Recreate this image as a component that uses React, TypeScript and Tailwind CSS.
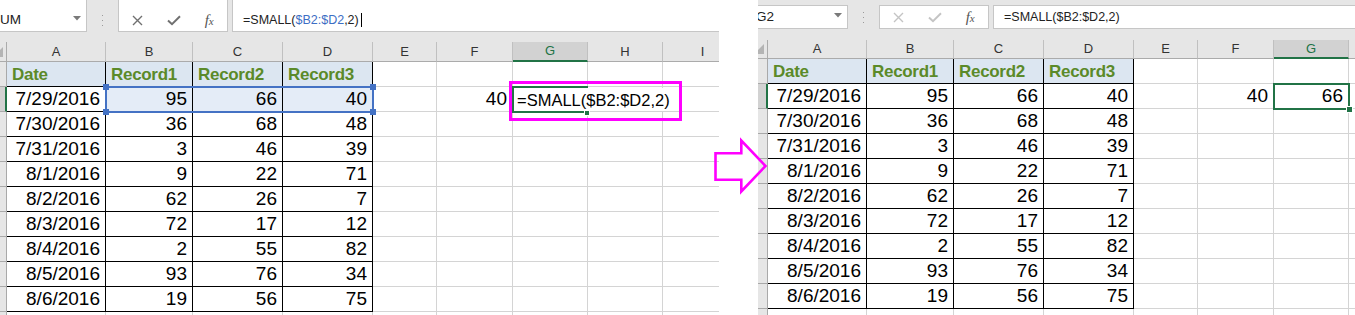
import React from "react";

type Side = "left" | "right";

const letters = ["A", "B", "C", "D", "E", "F", "G", "H", "I"];
const colW = ["w-[99px]", "w-[87px]", "w-[90px]", "w-[90px]", "w-[64px]", "w-[76px]", "w-[75px]", "w-[75px]", "w-[80px]"];
const heads = ["Date", "Record1", "Record2", "Record3"];

const data: [string, number, number, number][] = [
  ["7/29/2016", 95, 66, 40],
  ["7/30/2016", 36, 68, 48],
  ["7/31/2016", 3, 46, 39],
  ["8/1/2016", 9, 22, 71],
  ["8/2/2016", 62, 26, 7],
  ["8/3/2016", 72, 17, 12],
  ["8/4/2016", 2, 55, 82],
  ["8/5/2016", 93, 76, 34],
  ["8/6/2016", 19, 56, 75],
];

function Toolbar({ side }: { side: Side }) {
  const left = side === "left";
  const icon = left ? "#707070" : "#c4c4c4";
  return (
    <div className={left ? "flex h-[42px] items-start bg-[#e6e6e6]" : "flex h-[40px] items-start bg-[#e6e6e6] pt-[5px]"}>
      {/* name box */}
      <div
        className={
          left
            ? "flex h-[32px] w-[87px] shrink-0 items-center overflow-hidden border-r border-b border-[#c6c6c6] bg-white pt-[10px]"
            : "flex h-[24px] w-[90px] shrink-0 items-center overflow-hidden border-y border-r border-[#c6c6c6] bg-white"
        }
      >
        <span className={left ? "text-[13.5px] text-[#222]" : "ml-[-2px] text-[13.5px] text-[#222]"}>{left ? "UM" : "G2"}</span>
        <svg width="8" height="5" viewBox="0 0 8 5" className={left ? "ml-auto mr-[5px] mb-[5px]" : "ml-auto mr-[5px] mb-[3px]"}>
          <path d="M0 0H8L4 4.5Z" fill="#7a7a7a" />
        </svg>
      </div>
      {/* grip dots */}
      <div className={left ? "flex h-[32px] w-[31px] shrink-0 flex-col items-center justify-center gap-[4px] pt-[9px]" : "flex h-[24px] w-[31px] shrink-0 flex-col items-center justify-center gap-[4px]"}>
        <span className="h-px w-px bg-[#9a9a9a]" />
        <span className="h-px w-px bg-[#9a9a9a]" />
        <span className="h-px w-px bg-[#9a9a9a]" />
      </div>
      {/* cancel / enter / fx */}
      <div
        className={
          left
            ? "flex h-[32px] w-[110px] shrink-0 items-center border-x border-b border-[#c6c6c6] bg-white pl-px pt-[10px]"
            : "flex h-[24px] w-[110px] shrink-0 items-center border border-[#c6c6c6] bg-white pl-px"
        }
      >
        <div className="flex w-[36px] justify-center">
          <svg width="11" height="11" viewBox="0 0 11 11">
            <path d="M1 1L10 10M10 1L1 10" stroke={icon} strokeWidth="1.4" />
          </svg>
        </div>
        <div className="flex w-[36px] justify-center">
          <svg width="14" height="11" viewBox="0 0 14 11">
            <path d="M1 5.5L5 9.2L13 1.3" stroke={icon} strokeWidth="2" fill="none" />
          </svg>
        </div>
        <div className="flex w-[36px] justify-center font-['Liberation_Serif',serif] italic text-[#555]">
          <span className="text-[15px] leading-none">f</span>
          <span className="mt-[3px] text-[11px] leading-none">x</span>
        </div>
      </div>
      {/* formula input */}
      <div
        className={
          left
            ? "ml-[4px] flex h-[32px] flex-1 items-center border-l border-b border-[#c6c6c6] bg-white pl-[10px] pt-[9px] text-[12.5px] text-[#222]"
            : "ml-[4px] flex h-[24px] flex-1 items-center border-y border-l border-[#c6c6c6] bg-white pl-[10px] text-[12.5px] text-[#222]"
        }
      >
        {left ? (
          <>
            <span>=SMALL(</span>
            <span className="text-[#3c6ec4]">$B2:$D2</span>
            <span>,2)</span>
            <span className="ml-[2px] inline-block h-[14px] w-px bg-black" />
          </>
        ) : (
          <span>=SMALL($B2:$D2,2)</span>
        )}
      </div>
    </div>
  );
}

function ColHeader({ side }: { side: Side }) {
  const left = side === "left";
  const n = left ? 9 : 8;
  return (
    <div className={left ? "flex h-[20px] bg-[#e6e6e6]" : "flex h-[19px] bg-[#e6e6e6]"}>
      <div
        className={
          (left ? "w-[7px] pr-[3px]" : "w-[10px] pr-[3px]") +
          " flex shrink-0 items-end justify-end overflow-hidden border-r border-b border-[#ababab] pb-[4px]"
        }
      >
        <svg width="10" height="10" viewBox="0 0 10 10" className="shrink-0">
          <path d="M0 10L10 0V10Z" fill="#b4b4b4" />
        </svg>
      </div>
      {letters.slice(0, n).map((l, i) => (
        <div
          key={l}
          className={[
            colW[i],
            "flex shrink-0 items-center justify-center border-r border-[#c0c0c0] text-[13px]",
            i === 6 ? "border-b-2 border-b-[#217346] bg-[#d2d2d2] text-[#217346]" : "border-b border-b-[#ababab] text-[#333]",
          ].join(" ")}
        >
          {/* the right sheet only shows a sliver of column H */}
          {!left && i === 7 ? "" : l}
        </div>
      ))}
    </div>
  );
}

function Row({ side, r }: { side: Side; r: number }) {
  const left = side === "left";
  const n = left ? 9 : 8;
  const active = r === 1;
  return (
    <div className="flex h-[25px]">
      <div
        className={[
          left ? "w-[7px]" : "w-[10px]",
          "shrink-0 border-b border-[#a9a9a9]",
          active ? "border-r-2 border-r-[#217346] bg-[#d2d2d2]" : "border-r bg-[#e6e6e6]",
        ].join(" ")}
      />
      {letters.slice(0, n).map((l, c) => {
        const inTable = c < 4 && r <= 9;
        let text = "";
        let head = false;
        if (inTable) {
          if (r === 0) {
            text = heads[c];
            head = true;
          } else {
            text = String(data[r - 1][c]);
          }
        }
        if (r === 1 && c === 5) text = "40";
        if (!left && r === 1 && c === 6) text = "66";
        const selected = left && r === 1 && c >= 1 && c <= 3;
        return (
          <div
            key={l}
            className={[
              colW[c],
              "flex shrink-0 items-center border-r border-b pt-px",
              inTable ? "border-black" : "border-[#d4d4d4]",
              r === 0 && inTable ? "bg-[#dce6f1]" : selected ? "bg-[#e4ecf7]" : "",
              head
                ? "justify-start pl-[5px] text-[17px] font-bold tracking-[-0.3px] text-[#5b8a29]"
                : "justify-end pr-[5px] text-[19px] text-black",
            ].join(" ")}
          >
            {text}
          </div>
        );
      })}
    </div>
  );
}

function Sheet({ side }: { side: Side }) {
  const left = side === "left";
  return (
    <div className={left ? "relative h-[315px] w-[719px] shrink-0 overflow-hidden bg-white" : "relative h-[315px] w-[597px] shrink-0 overflow-hidden bg-white"}>
      <Toolbar side={side} />
      <ColHeader side={side} />
      {Array.from({ length: 11 }, (_, r) => (
        <Row key={r} side={side} r={r} />
      ))}

      {left ? (
        <>
          {/* referenced range B2:D2 */}
          <div className="absolute left-[105px] top-[86px] h-[27px] w-[269px] border-2 border-[#4472c4]" />
          <div className="absolute left-[103px] top-[84px] h-[6px] w-[6px] bg-[#4472c4]" />
          <div className="absolute left-[370px] top-[84px] h-[6px] w-[6px] bg-[#4472c4]" />
          <div className="absolute left-[103px] top-[109px] h-[6px] w-[6px] bg-[#4472c4]" />
          <div className="absolute left-[370px] top-[109px] h-[6px] w-[6px] bg-[#4472c4]" />

          {/* G2 in edit mode */}
          <div className="absolute left-[512px] top-[86px] h-[27px] w-[76px] border-2 border-r-0 border-[#217346]" />
          <div className="absolute left-[514px] top-[88px] flex h-[23px] w-[167px] items-center bg-white pl-[3px] pt-px text-[16.5px] text-black">
            =SMALL($B2:$D2,2)
          </div>
          <div className="absolute left-[584px] top-[110px] h-[6px] w-[6px] border border-white bg-[#217346]" />
          <div className="absolute left-[509px] top-[81px] h-[40px] w-[173px] border-[3px] border-[#ff00ff]" />
        </>
      ) : (
        <>
          <div className="absolute left-[515px] top-[83px] h-[27px] w-[77px] border-2 border-[#217346]" />
          <div className="absolute left-[588px] top-[106px] h-[7px] w-[7px] border border-white bg-[#217346]" />
        </>
      )}
    </div>
  );
}

export default function App() {
  return (
    <div className="relative flex h-[315px] w-[1355px] overflow-hidden bg-white font-['Liberation_Sans',Arial,sans-serif]">
      <Sheet side="left" />
      <div className="w-[39px] shrink-0" />
      <Sheet side="right" />

      <svg className="pointer-events-none absolute left-[710px] top-[135px]" width="62" height="62" viewBox="0 0 62 62">
        <path
          d="M5.5 18.3H31.3V5.5L55.5 31L31.3 56.5V44.7H5.5Z"
          fill="none"
          stroke="#ff00ff"
          strokeWidth="2.6"
          strokeLinejoin="miter"
        />
      </svg>
    </div>
  );
}
